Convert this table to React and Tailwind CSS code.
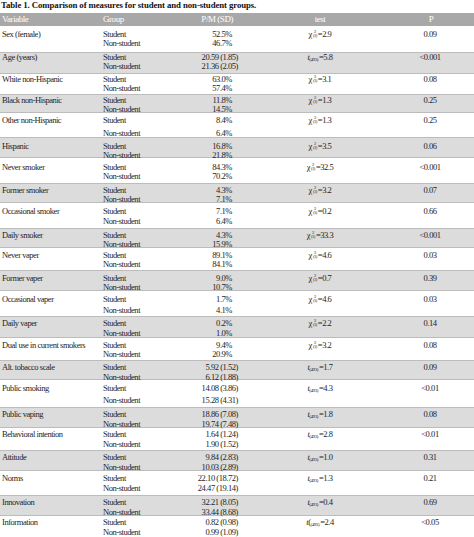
import React from 'react'

const rows = [
  { v: 'Sex (female)', s: '52.5%', n: '46.7%', kind: 'chi', stat: '2.9', p: '0.09', h: 'h-[26px]', pt: 'pt-[4px]', mt: 'mt-0' },
  { v: 'Age (years)', s: '20.59 (1.85)', n: '21.36 (2.05)', kind: 't', stat: '5.8', p: '<0.001', h: 'h-[22px]', pt: 'pt-[0px]', mt: 'mt-0', gray: true },
  { v: 'White non-Hispanic', s: '63.0%', n: '57.4%', kind: 'chi', stat: '3.1', p: '0.08', h: 'h-[20px]', pt: 'pt-[1px]', mt: 'mt-0' },
  { v: 'Black non-Hispanic', s: '11.8%', n: '14.5%', kind: 'chi', stat: '1.3', p: '0.25', h: 'h-[19px]', pt: 'pt-[1px]', mt: 'mt-0', gray: true },
  { v: 'Other non-Hispanic', s: '8.4%', n: '6.4%', kind: 'chi', stat: '1.3', p: '0.25', h: 'h-[24px]', pt: 'pt-[3px]', mt: 'mt-[4px]' },
  { v: 'Hispanic', s: '16.8%', n: '21.8%', kind: 'chi', stat: '3.5', p: '0.06', h: 'h-[21px]', pt: 'pt-[4px]', mt: 'mt-0', gray: true },
  { v: 'Never smoker', s: '84.3%', n: '70.2%', kind: 'chi', stat: '32.5', p: '<0.001', h: 'h-[25px]', pt: 'pt-[5px]', mt: 'mt-0' },
  { v: 'Former smoker', s: '4.3%', n: '7.1%', kind: 'chi', stat: '3.2', p: '0.07', h: 'h-[20px]', pt: 'pt-[2px]', mt: 'mt-0', gray: true },
  { v: 'Occasional smoker', s: '7.1%', n: '6.4%', kind: 'chi', stat: '0.2', p: '0.66', h: 'h-[25px]', pt: 'pt-[4px]', mt: 'mt-[1px]' },
  { v: 'Daily smoker', s: '4.3%', n: '15.9%', kind: 'chi', stat: '33.3', p: '<0.001', h: 'h-[20px]', pt: 'pt-[2px]', mt: 'mt-0', gray: true },
  { v: 'Never vaper', s: '89.1%', n: '84.1%', kind: 'chi', stat: '4.6', p: '0.03', h: 'h-[22px]', pt: 'pt-[3px]', mt: 'mt-0' },
  { v: 'Former vaper', s: '9.0%', n: '10.7%', kind: 'chi', stat: '0.7', p: '0.39', h: 'h-[21px]', pt: 'pt-[3px]', mt: 'mt-0', gray: true },
  { v: 'Occasional vaper', s: '1.7%', n: '4.1%', kind: 'chi', stat: '4.6', p: '0.03', h: 'h-[25px]', pt: 'pt-[4px]', mt: 'mt-[2px]' },
  { v: 'Daily vaper', s: '0.2%', n: '1.0%', kind: 'chi', stat: '2.2', p: '0.14', h: 'h-[22px]', pt: 'pt-[2px]', mt: 'mt-[1px]', gray: true },
  { v: 'Dual use in current smokers', s: '9.4%', n: '20.9%', kind: 'chi', stat: '3.2', p: '0.08', h: 'h-[22px]', pt: 'pt-[3px]', mt: 'mt-0' },
  { v: 'Alt. tobacco scale', s: '5.92 (1.52)', n: '6.12 (1.88)', kind: 't', stat: '1.7', p: '0.09', h: 'h-[20px]', pt: 'pt-[2px]', mt: 'mt-[1px]', gray: true },
  { v: 'Public smoking', s: '14.08 (3.86)', n: '15.28 (4.31)', kind: 't', stat: '4.3', p: '<0.01', h: 'h-[27px]', pt: 'pt-[4px]', mt: 'mt-[3px]' },
  { v: 'Public vaping', s: '18.86 (7.08)', n: '19.74 (7.48)', kind: 't', stat: '1.8', p: '0.08', h: 'h-[21px]', pt: 'pt-[2px]', mt: 'mt-[1px]', gray: true },
  { v: 'Behavioral intention', s: '1.64 (1.24)', n: '1.90 (1.52)', kind: 't', stat: '2.8', p: '<0.01', h: 'h-[22px]', pt: 'pt-[2px]', mt: 'mt-[1px]' },
  { v: 'Attitude', s: '9.84 (2.83)', n: '10.03 (2.89)', kind: 't', stat: '1.0', p: '0.31', h: 'h-[21px]', pt: 'pt-[2px]', mt: 'mt-[1px]', gray: true },
  { v: 'Norms', s: '22.10 (18.72)', n: '24.47 (19.14)', kind: 't', stat: '1.3', p: '0.21', h: 'h-[24px]', pt: 'pt-[3px]', mt: 'mt-[1px]' },
  { v: 'Innovation', s: '32.21 (8.05)', n: '33.44 (8.68)', kind: 't', stat: '0.4', p: '0.69', h: 'h-[21px]', pt: 'pt-[2px]', mt: 'mt-[1px]', gray: true },
  { v: 'Information', s: '0.82 (0.98)', n: '0.99 (1.09)', kind: 'tp', stat: '2.4', p: '<0.05', h: 'h-[21px]', pt: 'pt-[2px]', mt: 'mt-[1px]' },
]

function Stat({ kind, stat }) {
  if (kind === 'chi') {
    return (
      <span>
        χ
        <span className="inline-flex flex-col align-middle text-[4.5px] leading-[4px] mx-[1px] -mt-[2px]">
          <span>2</span>
          <span>(1)</span>
        </span>
        ={stat}
      </span>
    )
  }
  return (
    <span>
      <span className="italic">t</span>
      {kind === 'tp' && '('}
      <span className="text-[5px] align-[-1px] mr-[1px]">(493)</span>={stat}
    </span>
  )
}

export default function App() {
  return (
    <div className="w-[474px] h-[537px] overflow-hidden bg-white text-[#1e1e1e] font-['Liberation_Serif',serif] tracking-[-0.45px]">
      <div className="h-[13px] text-[8.8px] leading-[11px] font-bold text-[#111] tracking-[-0.1px] pl-[1px]">
        Table 1. Comparison of measures for student and non-student groups.
      </div>

      {/* Header */}
      <div className="h-[13px] bg-[#a8a8a8] text-white text-[9px] leading-[13px] flex">
        <div className="w-[103px] pl-[2px]">Variable</div>
        <div className="w-[77px]">Group</div>
        <div className="w-[53px] text-right">P/M (SD)</div>
        <div className="w-[174px] text-center">test</div>
        <div className="w-[48px] text-center">P</div>
      </div>

      {rows.map((r) => {
        const pct = r.s.endsWith('%')
        return (
          <div
            key={r.v}
            className={`${r.h} ${r.pt} flex text-[8.5px] leading-[9px] ${r.gray ? 'bg-[#dcdcdc] border-y border-[#bcbcbc]' : ''}`}
          >
            <div className="w-[103px] pl-[2px]">{r.v}</div>
            <div className="w-[77px] flex flex-col">
              <span>Student</span>
              <span className={r.mt}>Non-student</span>
            </div>
            <div className={`w-[59px] flex flex-col text-right ${pct ? 'pr-[7px]' : 'pr-[1px]'}`}>
              <span className="whitespace-nowrap">{r.s}</span>
              <span className={`${r.mt} whitespace-nowrap`}>{r.n}</span>
            </div>
            <div className="w-[162px] text-center whitespace-nowrap">
              <Stat kind={r.kind} stat={r.stat} />
            </div>
            <div className="w-[58px] text-center">{r.p}</div>
          </div>
        )
      })}
    </div>
  )
}
